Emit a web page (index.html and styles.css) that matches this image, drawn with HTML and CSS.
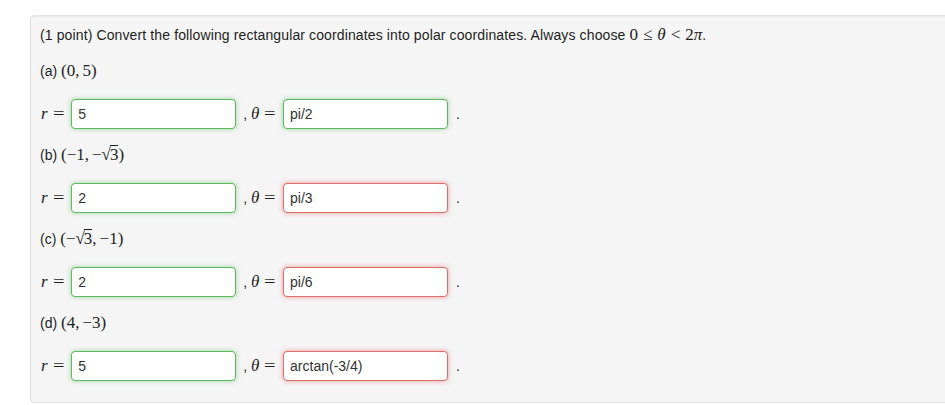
FILE: index.html
```html
<!DOCTYPE html>
<html>
<head>
<meta charset="utf-8">
<link rel="stylesheet" href="styles.css">
</head>
<body>
<div class="panel">
  <p class="title">(1 point) Convert the following rectangular coordinates into polar coordinates. Always choose <span class="m"><span class="n">0</span><span class="rel">≤</span><span class="v">θ</span><span class="rel">&lt;</span><span class="n">2</span><span class="v">π</span></span>.</p>

  <p class="label">(a) <span class="m">(0,<span class="thin"></span>5)</span></p>
  <div class="row">
    <span class="m v rv">r</span><span class="m eq">=</span><input class="ans ok" value="5"><span class="sep">,</span><span class="m v tv">θ</span><span class="m eq">=</span><input class="ans ok" value="pi/2"><span class="dot">.</span>
  </div>

  <p class="label">(b) <span class="m">(−1,<span class="thin"></span>−<span class="sqrt">√<span class="rad">3</span></span>)</span></p>
  <div class="row">
    <span class="m v rv">r</span><span class="m eq">=</span><input class="ans ok" value="2"><span class="sep">,</span><span class="m v tv">θ</span><span class="m eq">=</span><input class="ans bad" value="pi/3"><span class="dot">.</span>
  </div>

  <p class="label">(c) <span class="m">(−<span class="sqrt">√<span class="rad">3</span></span>,<span class="thin"></span>−1)</span></p>
  <div class="row">
    <span class="m v rv">r</span><span class="m eq">=</span><input class="ans ok" value="2"><span class="sep">,</span><span class="m v tv">θ</span><span class="m eq">=</span><input class="ans bad" value="pi/6"><span class="dot">.</span>
  </div>

  <p class="label">(d) <span class="m">(4,<span class="thin"></span>−3)</span></p>
  <div class="row">
    <span class="m v rv">r</span><span class="m eq">=</span><input class="ans ok" value="5"><span class="sep">,</span><span class="m v tv">θ</span><span class="m eq">=</span><input class="ans bad" value="arctan(-3/4)"><span class="dot">.</span>
  </div>
</div>
</body>
</html>
```

FILE: styles.css
```css
html, body {
  margin: 0;
  padding: 0;
  background: #ffffff;
  overflow: hidden;
}
body {
  font-family: "Liberation Sans", Arial, Helvetica, sans-serif;
  font-size: 14px;
  color: #1e1e1e;
  width: 945px;
  height: 405px;
}
.panel {
  margin: 15px 0 0 30px;
  width: 940px;
  height: 388px;
  box-sizing: border-box;
  background: #f5f5f5;
  border: 1px solid #e3e3e3;
  border-radius: 4px;
  box-shadow: inset 0 1px 1px rgba(0, 0, 0, 0.05);
  padding: 9px 9px 0 9px;
}
p {
  margin: 0;
}
.title {
  line-height: 20px;
  letter-spacing: 0.12px;
}
.title .m {
  letter-spacing: 0;
}
.label {
  line-height: 20px;
  margin-top: 16px;
}
.m {
  font-family: "Liberation Serif", "Times New Roman", serif;
  font-size: 17px;
}
.v {
  font-style: italic;
}
.rel {
  margin: 0 5px;
}
.thin {
  display: inline-block;
  width: 3px;
}
.sqrt {
  display: inline-block;
  line-height: 1;
}
.rad {
  display: inline-block;
  border-top: 1px solid #1e1e1e;
  padding-top: 1px;
  margin-left: -1px;
  line-height: 0.95;
}
.row {
  display: flex;
  align-items: center;
  height: 30px;
  margin-top: 18px;
}
.rv {
  margin-left: 1px;
}
.eq {
  margin-left: 6px;
  transform: scaleX(1.2);
}
.ans {
  box-sizing: border-box;
  width: 165px;
  height: 30px;
  margin: 0 0 0 8px;
  padding: 0 6px;
  background: #ffffff;
  border-radius: 4px;
  font-family: "Liberation Sans", Arial, Helvetica, sans-serif;
  font-size: 14px;
  color: #333333;
  outline: none;
}
.ok {
  border: 1px solid #5cb85c;
  box-shadow: 0 0 5px rgba(92, 184, 92, 0.55);
}
.bad {
  border: 1px solid #e06c6c;
  box-shadow: 0 0 5px rgba(217, 83, 79, 0.55);
}
.sep {
  margin-left: 7px;
}
.tv {
  margin-left: 4px;
}
.dot {
  margin-left: 8px;
}
```
